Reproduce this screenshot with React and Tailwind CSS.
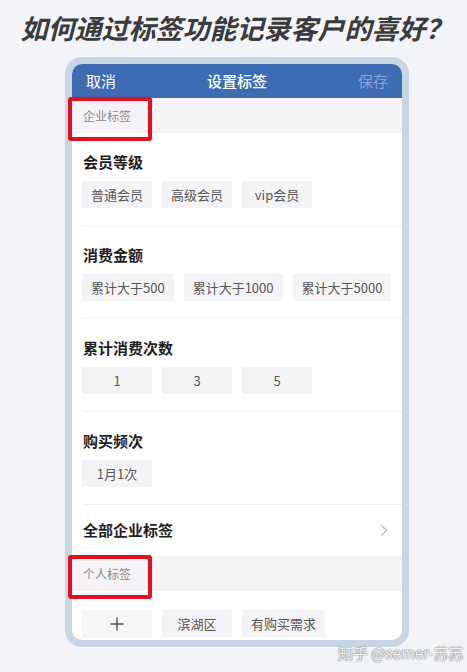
const groups = [
  { title: "会员等级", tags: ["普通会员", "高级会员", "vip会员"] },
  { title: "消费金额", tags: ["累计大于500", "累计大于1000", "累计大于5000"] },
  { title: "累计消费次数", tags: ["1", "3", "5"] },
  { title: "购买频次", tags: ["1月1次"] },
];

function Chip({ children }) {
  return (
    <div className="h-[27px] min-w-[70px] px-[9px] flex items-center justify-center bg-[#f4f4f6] text-[13px] text-[#555]">
      {children}
    </div>
  );
}

function SectionHead({ label }) {
  return (
    <div className="relative h-[35px] bg-[#f5f3f6] flex items-center pl-[11px] text-[12px] text-[#8a8a8a]">
      {label}
      <div className="absolute left-[-4px] top-[-1px] w-[84px] h-[44px] border-[4px] border-[#e3101f] rounded-[3px]" />
    </div>
  );
}

export default function App() {
  return (
    <div
      className="relative w-[467px] h-[672px] bg-[#f2f4f8] flex flex-col items-center overflow-hidden"
      style={{ fontFamily: '"Noto Sans CJK SC", "Noto Sans", sans-serif' }}
    >
      {/* Title */}
      <div className="mt-[9px] ml-[6px] h-[38px] text-[27px] leading-[38px] font-bold italic text-[#3b3b3b]">
        如何通过标签功能记录客户的喜好？
      </div>

      {/* Phone frame */}
      <div className="mt-[10px] ml-[7px] w-[344px] border-[7px] border-[#c8d5e4] rounded-[17px] bg-white">
        {/* Header */}
        <div className="h-[34px] bg-[#3d6cb3] rounded-t-[10px] flex items-center justify-between px-[14px] text-[15px]">
          <span className="text-white">取消</span>
          <span className="text-white font-medium">设置标签</span>
          <span className="text-[#88a5d4]">保存</span>
        </div>

        <SectionHead label="企业标签" />

        {groups.map((g) => (
          <div key={g.title}>
            <div className="pl-[10px] pt-[19px] pb-[17px]">
              <div className="pl-[1px] text-[15px] leading-[20px] font-bold text-[#1f1f1f]">
                {g.title}
              </div>
              <div className="mt-[9px] flex gap-[10px]">
                {g.tags.map((t) => (
                  <Chip key={t}>{t}</Chip>
                ))}
              </div>
            </div>
            <div className="ml-[10px] h-px bg-[#efeff1]" />
          </div>
        ))}

        <div className="h-[51px] pl-[11px] pr-[14px] flex items-center justify-between">
          <span className="text-[15px] font-bold text-[#1f1f1f]">全部企业标签</span>
          <svg width="8" height="13" viewBox="0 0 8 13" fill="none">
            <polyline points="1.5,1.5 6.5,6.5 1.5,11.5" stroke="#b9b9b9" strokeWidth="1.4" />
          </svg>
        </div>

        <SectionHead label="个人标签" />

        <div className="pl-[10px] pt-[19px] pb-[2px] flex gap-[10px]">
          <div className="h-[28px] w-[70px] flex items-center justify-center bg-[#f6f4f6]">
            <svg width="14" height="14" viewBox="0 0 14 14">
              <path d="M7 0.5v13M0.5 7h13" stroke="#555" strokeWidth="1.4" />
            </svg>
          </div>
          <Chip>滨湖区</Chip>
          <Chip>有购买需求</Chip>
        </div>
      </div>

      {/* Watermark */}
      <div className="absolute left-[338px] top-[642px] text-[15px] text-[#f4f4f4] [text-shadow:0_0_1px_#666,0_0_2px_#888] whitespace-nowrap">
        知乎 @semer-苏苏
      </div>
    </div>
  );
}
